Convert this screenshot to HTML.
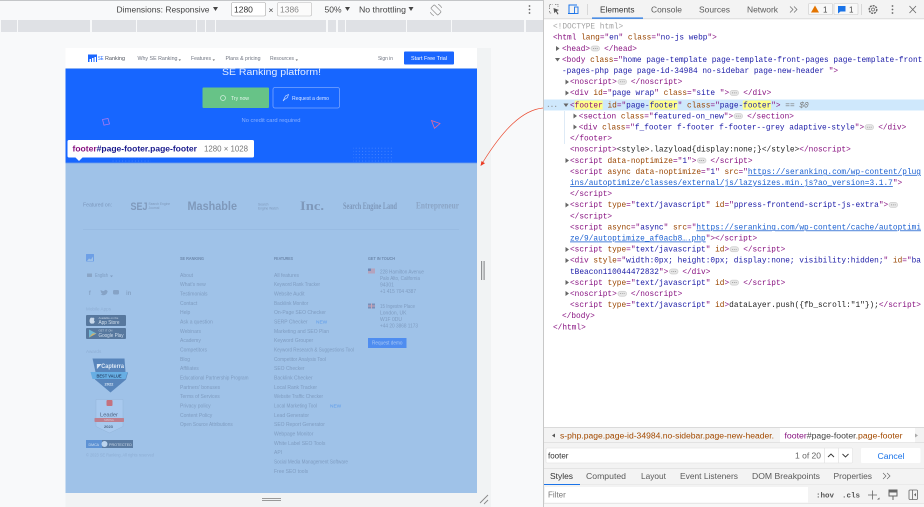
<!DOCTYPE html>
<html lang="en"><head><meta charset="utf-8"><title>DevTools</title>
<style>
html,body{margin:0;padding:0;width:924px;height:507px;overflow:hidden;background:#f8f9fa}
svg{display:block;filter:blur(.33px)}
text{font-family:"Liberation Sans",sans-serif;white-space:pre}
.m text,text.m{font-family:"Liberation Mono",monospace;font-size:7.8px;fill:#555}
.t{fill:#881280}.a{fill:#994500}.v{fill:#1a1aa6}.g{fill:#777}.k{fill:#222}
.l{fill:#1a5fd0;text-decoration:underline}
.f{font-size:5px;fill:#7f9cc0}
.h{font-size:4.4px;font-weight:bold;fill:#6d88ab}
.n{font-size:5.2px;fill:#6f7480}
.d{font-size:8.5px;fill:#444}
.tab{font-size:8.3px;fill:#5a5a5a}
</style></head><body>
<svg width="924" height="507" viewBox="0 0 924 507" xmlns="http://www.w3.org/2000/svg">
<defs>
<pattern id="dots" width="3.2" height="3.2" patternUnits="userSpaceOnUse"><circle cx="1" cy="1" r=".4" fill="#6396ff"/></pattern>
</defs>
<!-- left device toolbar -->
<rect width="543" height="507" fill="#f8f9fa"/>
<rect width="543" height="1" fill="#c4c6c8"/>
<rect y="1" width="543" height="17" fill="#f8f9fa"/>
<text x="116.5" y="12.5" class="d" textLength="93" lengthAdjust="spacingAndGlyphs">Dimensions: Responsive</text>
<path d="M213 7h5l-2.500 4z" fill="#444"/>
<rect x="231.500" y="2.500" width="34" height="13.500" rx="1.500" fill="#fff" stroke="#aaa" stroke-width=".6"/>
<text x="234" y="12.500" class="d" style="fill:#333">1280</text>
<text x="268.500" y="13" class="d">×</text>
<rect x="277.500" y="2.500" width="34" height="13.500" rx="1.500" fill="#fbfbfb" stroke="#bbb" stroke-width=".6"/>
<text x="280" y="12.500" class="d" style="fill:#888">1386</text>
<text x="324.500" y="12.500" class="d">50%</text>
<path d="M345 7h5l-2.500 4z" fill="#444"/>
<text x="359" y="12.500" class="d" textLength="47" lengthAdjust="spacingAndGlyphs">No throttling</text>
<path d="M408.500 7h5l-2.500 4z" fill="#444"/>
<g transform="rotate(-45 436 10)" fill="none" stroke="#8a8a8a" stroke-width=".7"><rect x="433.500" y="5" width="5" height="10" rx="1"/><path d="M430.500 7.500a7 7 0 0 0 0 5M441.500 7.500a7 7 0 0 1 0 5"/></g>
<g fill="#666"><circle cx="529.500" cy="6" r=".9"/><circle cx="529.500" cy="9.500" r=".9"/><circle cx="529.500" cy="13" r=".9"/></g>
<g fill="#dfe1e5">
<rect x="1" y="20" width="16" height="12"/><rect x="18" y="20" width="72" height="12"/><rect x="92" y="20" width="44" height="12"/><rect x="137" y="20" width="59" height="12"/><rect x="197" y="20" width="8" height="12"/><rect x="206" y="20" width="9" height="12"/><rect x="216" y="20" width="110" height="12"/><rect x="328" y="20" width="8" height="12"/><rect x="338" y="20" width="7" height="12"/><rect x="346" y="20" width="60" height="12"/><rect x="407" y="20" width="44" height="12"/><rect x="452" y="20" width="72" height="12"/><rect x="526" y="20" width="17" height="12"/>
</g>
<!-- page side strips -->
<rect x="477" y="48" width="14" height="445" fill="#f1f3f4"/>
<rect x="65.500" y="493" width="425.500" height="14" fill="#f1f3f4"/>
<rect x="481" y="261" width="1.200" height="19" fill="#8f9194"/><rect x="483.500" y="261" width="1.200" height="19" fill="#8f9194"/>
<rect x="262" y="498" width="19" height="1" fill="#999"/><rect x="262" y="500" width="19" height="1" fill="#999"/>
<path d="M480 503l8-8M484 504l4-4" stroke="#888" stroke-width=".9"/>
<!-- header -->
<rect x="65.500" y="48" width="411.500" height="20.500" fill="#fff"/>
<rect x="88" y="54.500" width="9" height="7.500" fill="#1a66ff"/>
<path d="M89.500 62v-3h1.500v3zM92 62v-4h1.500v4zM94.500 62v-5h1.500v5z" fill="#fff"/>
<text x="98" y="60" font-size="5" fill="#1a66ff" textLength="5.500" lengthAdjust="spacingAndGlyphs">SE</text>
<text x="105" y="60" font-size="5.200" fill="#4d525c" textLength="20" lengthAdjust="spacingAndGlyphs">Ranking</text>
<text x="137.500" y="60" class="n" textLength="40" lengthAdjust="spacingAndGlyphs">Why SE Ranking</text>
<text x="191" y="60" class="n" textLength="20" lengthAdjust="spacingAndGlyphs">Features</text>
<text x="225.500" y="60" class="n" textLength="35" lengthAdjust="spacingAndGlyphs">Plans &amp; pricing</text>
<text x="270" y="60" class="n" textLength="24" lengthAdjust="spacingAndGlyphs">Resources</text>
<path d="M178.500 59.500h2.500l-1.250 1.200zM212.500 59.500h2.500l-1.250 1.200zM295.500 59.500h2.500l-1.250 1.200z" fill="#555"/>
<text x="378" y="60" class="n" textLength="15" lengthAdjust="spacingAndGlyphs">Sign in</text>
<rect x="404" y="51.500" width="50" height="13" rx="1" fill="#1a66ff"/>
<text x="411" y="60" font-size="5.200" fill="#fff" textLength="36" lengthAdjust="spacingAndGlyphs">Start Free Trial</text>
<!-- blue hero -->
<rect x="65.500" y="68.500" width="411.500" height="95" fill="#1766ff"/>
<rect x="65.500" y="68" width="411.500" height=".8" fill="#a9c4f0"/>
<svg x="65.500" y="69" width="411.500" height="20" overflow="hidden"><text x="156.500" y="6" font-size="9.500" fill="#e6eeff" textLength="99" lengthAdjust="spacingAndGlyphs">SE Ranking platform!</text></svg>
<rect x="67" y="72" width="16" height="2" fill="url(#dots)"/>
<rect x="202.500" y="87.500" width="66.500" height="20.500" rx="1" fill="#67c387"/>
<circle cx="223" cy="98" r="2.500" fill="none" stroke="#d4f0de" stroke-width=".7"/>
<text x="231" y="100" font-size="5.200" fill="#e7f6ec" textLength="18" lengthAdjust="spacingAndGlyphs">Try now</text>
<rect x="273" y="87.500" width="66.500" height="20.500" rx="2" fill="none" stroke="#7aa6ff" stroke-width=".8"/>
<path d="M283 101l2.500-5 3-1.500-1 3-3 2z" fill="none" stroke="#cfe0ff" stroke-width=".6"/>
<text x="292" y="100" font-size="5.200" fill="#d9e6ff" textLength="37" lengthAdjust="spacingAndGlyphs">Request a demo</text>
<text x="241.500" y="122" font-size="5.400" fill="#8ab0ff" textLength="59" lengthAdjust="spacingAndGlyphs">No credit card required</text>
<path d="M102.500 119.500l5.500-1 1.500 5.500-5.500 1.200z" fill="none" stroke="#a97bf0" stroke-width=".8"/>
<path d="M431.500 120.500l8.500 3-5.500 4.800z" fill="none" stroke="#e86a9c" stroke-width=".8"/>
<rect x="353" y="146" width="40" height="17" fill="url(#dots)"/>
<rect x="112" y="158" width="39" height="5" fill="url(#dots)"/>
<!-- footer overlay -->
<rect x="65.500" y="163" width="411.500" height="330" fill="#9fc2e8"/>
<rect x="65.500" y="162.500" width="411.500" height=".8" fill="#5d93ee"/>
<text x="83" y="206.500" class="f" style="fill:#7b97bc;font-size:5.200px" textLength="29" lengthAdjust="spacingAndGlyphs">Featured on:</text>
<g fill="#7f99bb">
<text x="130.500" y="210" font-size="11" font-weight="bold" textLength="17" lengthAdjust="spacingAndGlyphs">SEJ</text>
<text x="148.500" y="205" font-size="3.300">Search Engine</text><text x="148.500" y="209" font-size="3.300">Journal</text>
<text x="187.500" y="210" font-size="11.500" font-weight="bold" textLength="49.500" lengthAdjust="spacingAndGlyphs">Mashable</text>
<text x="258" y="205.500" font-size="3.300">Search</text><text x="258" y="209.500" font-size="3.300">Engine Watch</text>
<text x="300" y="210" font-size="12.500" font-weight="bold" style="font-family:'Liberation Serif',serif" textLength="24" lengthAdjust="spacingAndGlyphs">Inc.</text>
<text x="343" y="209" font-size="9" font-weight="bold" style="font-family:'Liberation Serif',serif" textLength="54" lengthAdjust="spacingAndGlyphs">Search Engine Land</text>
<text x="416" y="208.500" font-size="9" font-weight="bold" style="font-family:'Liberation Serif',serif;fill:#8ba5c6" textLength="43" lengthAdjust="spacingAndGlyphs">Entrepreneur</text>
</g>
<rect x="83" y="229.300" width="376" height=".6" fill="#94b7de"/>
<!-- col 1 -->
<rect x="86" y="254" width="8" height="7.500" rx=".5" fill="#6d9fe6"/>
<path d="M87 261l2-2.500 2 1 2-3v4.500z" fill="#9fc2e8"/>
<rect x="87" y="273.500" width="5" height="3.500" fill="#8aa5c6"/>
<text x="95" y="277.200" class="f" textLength="13" lengthAdjust="spacingAndGlyphs">English</text>
<path d="M110 275.500h3l-1.500 1.700z" fill="#7f9cc0"/>
<g fill="#86a3c6">
<text x="88.700" y="295" font-size="6" font-weight="bold">f</text>
<path d="M100.500 290c2 1 3 1.200 3.700 1 .5-1.500 2.500-1.500 3 0l.8-.3-.6 1c0 2-2 3.500-4 3.500-1.200 0-2-.3-2.800-.8 1 0 1.500-.2 2-.6-1-.2-1.600-1-2.100-3.800z"/>
<rect x="113" y="290" width="6" height="4.500" rx="1.200"/>
<text x="126" y="295" font-size="6" font-weight="bold">in</text>
</g>
<text x="86" y="310.500" font-size="4.600" fill="#8eaed4">Mobile Apps</text>
<rect x="86" y="315" width="40" height="11" rx="1" fill="#57789e"/>
<path d="M91 317.500c1 .4 2 .4 2.500 0 .5 1 .7 .9 1.200 1.400-1 .6-1 2 .2 2.600-.6 1.500-1.300 2.500-2.400 2-1 .4-2.700 .2-3-2.500 0-2 1-3.200 1.500-3.500z" fill="#c8d8ea"/>
<text x="98.500" y="319" font-size="2.800" fill="#c4d4e6">Available on the</text>
<text x="98.500" y="324.200" font-size="5.600" fill="#d0deed" textLength="21" lengthAdjust="spacingAndGlyphs">App Store</text>
<rect x="86" y="328" width="40" height="11" rx="1" fill="#57789e"/>
<path d="M89 329.500l7.500 4-7.500 4z" fill="#6fb7d6"/><path d="M92.500 333.500l4 0-7.500 4z" fill="#d0b26a"/>
<text x="98.500" y="331.500" font-size="2.800" fill="#c4d4e6">GET IT ON</text>
<text x="98.500" y="337" font-size="5.600" fill="#d0deed" textLength="25" lengthAdjust="spacingAndGlyphs">Google Play</text>
<text x="86" y="353" font-size="4.600" fill="#8eaed4">Awards</text>
<path d="M92.500 358.500h32l1 13.500 2.500.5-2 7-15.500 13-15.500-13-2-7 2.500-.5z" fill="#5885bb"/>
<path d="M90.500 372h37l-2 7h-33z" fill="#67aee4"/>
<text x="97" y="368" font-size="6" font-weight="bold" fill="#dce8f5" textLength="27" lengthAdjust="spacingAndGlyphs">◤Capterra</text>
<text x="96.500" y="377.500" font-size="4.200" font-weight="bold" fill="#2b4b73" textLength="25" lengthAdjust="spacingAndGlyphs">BEST VALUE</text>
<text x="104.500" y="385.500" font-size="4" font-weight="bold" fill="#dce8f5">2022</text>
<path d="M96 399.500h27v27l-13.500 6.500-13.500-6.500z" fill="#a8c9ee" stroke="#93b5da" stroke-width=".5"/>
<rect x="106.500" y="400" width="6" height="6" rx="1" fill="#c4727f"/>
<text x="100" y="416.300" font-size="5.500" fill="#4d6280" textLength="18" lengthAdjust="spacingAndGlyphs">Leader</text>
<rect x="94.500" y="418" width="29.500" height="4" rx=".7" fill="#be7f8f"/>
<text x="104" y="421.200" font-size="2.600" fill="#d9c9d2">SPRING</text>
<text x="104" y="427.800" font-size="4" font-weight="bold" fill="#4d6280">2023</text>
<rect x="86" y="440" width="47" height="8" fill="#5a7ba2"/><rect x="86" y="440" width="16" height="8" fill="#5e92d4"/>
<circle cx="104.500" cy="444" r="3" fill="#bcd4ee"/>
<text x="88.500" y="445.800" font-size="3.600" fill="#cfe0f2">DMCA</text>
<text x="109" y="445.800" font-size="3.500" fill="#cfdcea" textLength="23" lengthAdjust="spacingAndGlyphs">PROTECTED</text>
<text x="86" y="456.500" font-size="4.200" fill="#8eaed4" textLength="68" lengthAdjust="spacingAndGlyphs">© 2023 SE Ranking. All rights reserved</text>
<!-- col 2 -->
<text x="180" y="259.800" class="h" textLength="24" lengthAdjust="spacingAndGlyphs">SE RANKING</text>
<g class="f">
<text class="f" x="180" y="276.800">About</text>
<text class="f" x="180" y="286.100">What's new</text>
<text class="f" x="180" y="295.400">Testimonials</text>
<text class="f" x="180" y="304.800">Contact</text>
<text class="f" x="180" y="314.100">Help</text>
<text class="f" x="180" y="323.400">Ask a question</text>
<text class="f" x="180" y="332.800">Webinars</text>
<text class="f" x="180" y="342.100">Academy</text>
<text class="f" x="180" y="351.400">Competitors</text>
<text class="f" x="180" y="360.800">Blog</text>
<text class="f" x="180" y="370.100">Affiliates</text>
<text class="f" x="180" y="379.400" textLength="68.500" lengthAdjust="spacingAndGlyphs">Educational Partnership Program</text>
<text class="f" x="180" y="388.800">Partners' bonuses</text>
<text class="f" x="180" y="398.100">Terms of Services</text>
<text class="f" x="180" y="407.400">Privacy policy</text>
<text class="f" x="180" y="416.800">Content Policy</text>
<text class="f" x="180" y="426.100" textLength="52.700" lengthAdjust="spacingAndGlyphs">Open Source Attributions</text>
</g>
<!-- col 3 -->
<text x="274" y="259.800" class="h" textLength="19" lengthAdjust="spacingAndGlyphs">FEATURES</text>
<text class="f" x="274" y="276.800">All features</text>
<text class="f" x="274" y="286.100" textLength="46" lengthAdjust="spacingAndGlyphs">Keyword Rank Tracker</text>
<text class="f" x="274" y="295.400">Website Audit</text>
<text class="f" x="274" y="304.800" textLength="34.300" lengthAdjust="spacingAndGlyphs">Backlink Monitor</text>
<text class="f" x="274" y="314.100">On-Page SEO Checker</text>
<text class="f" x="274" y="323.400">SERP Checker</text>
<text x="316" y="323.400" font-size="4.800" fill="#5d9ceb">NEW</text>
<text class="f" x="274" y="332.800">Marketing and SEO Plan</text>
<text class="f" x="274" y="342.100">Keyword Grouper</text>
<text class="f" x="274" y="351.400" textLength="80" lengthAdjust="spacingAndGlyphs">Keyword Research &amp; Suggestions Tool</text>
<text class="f" x="274" y="360.800" textLength="52" lengthAdjust="spacingAndGlyphs">Competitor Analysis Tool</text>
<text class="f" x="274" y="370.100">SEO Checker</text>
<text class="f" x="274" y="379.400">Backlink Checker</text>
<text class="f" x="274" y="388.800">Local Rank Tracker</text>
<text class="f" x="274" y="398.100" textLength="49" lengthAdjust="spacingAndGlyphs">Website Traffic Checker</text>
<text class="f" x="274" y="407.400" textLength="43" lengthAdjust="spacingAndGlyphs">Local Marketing Tool</text>
<text x="330" y="407.400" font-size="4.800" fill="#5d9ceb">NEW</text>
<text class="f" x="274" y="416.800">Lead Generator</text>
<text class="f" x="274" y="426.100">SEO Report Generator</text>
<text class="f" x="274" y="435.400">Webpage Monitor</text>
<text class="f" x="274" y="444.800">White Label SEO Tools</text>
<text class="f" x="274" y="454.100">API</text>
<text class="f" x="274" y="463.400" textLength="74" lengthAdjust="spacingAndGlyphs">Social Media Management Software</text>
<text class="f" x="274" y="472.800">Free SEO tools</text>
<!-- col 4 -->
<text x="368" y="259.800" class="h" textLength="27" lengthAdjust="spacingAndGlyphs">GET IN TOUCH</text>
<rect x="368" y="268.500" width="7" height="5" fill="#b5a3bd"/><rect x="368" y="268.500" width="3" height="2.500" fill="#6f88b5"/>
<text class="f" x="380" y="273.500" textLength="44" lengthAdjust="spacingAndGlyphs">228 Hamilton Avenue</text>
<text class="f" x="380" y="279.800" textLength="40" lengthAdjust="spacingAndGlyphs">Palo Alto, California</text>
<text class="f" x="380" y="286.300">94301</text>
<text class="f" x="380" y="292.800" textLength="36" lengthAdjust="spacingAndGlyphs">+1 415 704 4387</text>
<rect x="368" y="303.500" width="7" height="5" fill="#7a8fb8"/><path d="M368 306h7M371.500 303.500v5" stroke="#c9a5b8" stroke-width="1"/>
<text class="f" x="380" y="308" textLength="35" lengthAdjust="spacingAndGlyphs">15 Ingestre Place</text>
<text class="f" x="380" y="314.500">London, UK</text>
<text class="f" x="380" y="321">W1F 0DU</text>
<text class="f" x="380" y="327.500" textLength="38" lengthAdjust="spacingAndGlyphs">+44 20 3868 1173</text>
<rect x="368" y="338" width="38.500" height="10" fill="#4f8df0"/>
<text x="372" y="344.700" font-size="5" fill="#a9c8f5" textLength="30.500" lengthAdjust="spacingAndGlyphs">Request demo</text>
<!-- tooltip -->
<path d="M75 157h8l-4 4z" fill="#fff"/>
<rect x="67.500" y="140" width="186.500" height="17.500" rx="1.500" fill="#fff"/>
<text x="72.500" y="151.500" font-size="8.200" font-weight="bold" textLength="124.500" lengthAdjust="spacingAndGlyphs"><tspan fill="#881280">footer</tspan><tspan fill="#1a1a8c">#page-footer.page-footer</tspan></text>
<text x="204" y="151.500" font-size="8.200" fill="#777" textLength="44" lengthAdjust="spacingAndGlyphs">1280 × 1028</text>
<!-- devtools -->
<rect x="543" width="381" height="507" fill="#fff"/>
<rect x="543" width="1" height="507" fill="#c8c8c8"/>
<rect x="544" width="380" height="18.500" fill="#f3f3f3"/>
<rect x="544" y="18.500" width="380" height=".7" fill="#cfcfcf"/>
<path d="M549.500 9V4.500h3M555 4.500h3V7M549.500 11v2h2" fill="none" stroke="#777" stroke-width=".8" stroke-dasharray="1.400 .9"/><path d="M553.500 8l5.500 2-2.200 1 1.700 3-1 .5-1.700-3-1.500 1.800z" fill="#555"/>
<path d="M569 13V5h8M568 13.500h7" fill="none" stroke="#1a73e8" stroke-width="1"/><rect x="574.500" y="7" width="3.500" height="6.500" fill="none" stroke="#1a73e8" stroke-width=".9"/>
<rect x="587" y="4" width=".7" height="11" fill="#ccc"/>
<text x="600" y="12.500" class="tab" style="fill:#333" textLength="34.500" lengthAdjust="spacingAndGlyphs">Elements</text>
<rect x="592" y="17.500" width="51" height="1.200" fill="#1a73e8"/>
<text x="651" y="12.500" class="tab" textLength="31" lengthAdjust="spacingAndGlyphs">Console</text>
<text x="699" y="12.500" class="tab" textLength="31" lengthAdjust="spacingAndGlyphs">Sources</text>
<text x="747" y="12.500" class="tab" textLength="31" lengthAdjust="spacingAndGlyphs">Network</text>
<path d="M790 6.500l3 3-3 3M794 6.500l3 3-3 3" fill="none" stroke="#666" stroke-width=".7"/>
<rect x="808.500" y="3.500" width="24" height="11" rx="1" fill="#f8f8f8" stroke="#ccc" stroke-width=".6"/>
<path d="M811 12.500l4-7 4 7z" fill="#e37400"/>
<text x="823" y="12.300" font-size="8" fill="#444">1</text>
<rect x="834" y="3.500" width="24" height="11" rx="1" fill="#f8f8f8" stroke="#ccc" stroke-width=".6"/>
<path d="M838 6h7.500v5.500h-5l-2.500 2z" fill="#1a73e8"/>
<text x="849" y="12.300" font-size="8" fill="#444">1</text>
<rect x="861" y="4" width=".7" height="11" fill="#ccc"/>
<circle cx="873" cy="9.500" r="3.800" fill="none" stroke="#666" stroke-width="1.400" stroke-dasharray="2 .9"/><circle cx="873" cy="9.500" r="1.500" fill="none" stroke="#666" stroke-width=".7"/>
<g fill="#666"><circle cx="892.500" cy="6" r=".9"/><circle cx="892.500" cy="9.500" r=".9"/><circle cx="892.500" cy="13" r=".9"/></g>
<path d="M909.500 6l6.500 7M916 6l-6.500 7" stroke="#666" stroke-width=".8"/>
<!-- dom tree -->
<rect x="544" y="99.500" width="380" height="11" fill="#cfe8fc"/>
<rect x="574.700" y="100.500" width="28" height="9" fill="#ffff8a"/>
<rect x="649.400" y="100.500" width="28" height="9" fill="#ffff8a"/>
<rect x="742.800" y="100.500" width="28" height="9" fill="#ffff8a"/>
<rect x="564" y="111" width=".7" height="33" fill="#cfe0f2"/>
<text x="546" y="107" class="m" style="fill:#888;letter-spacing:-1px">...</text>
<g class="m">
<text x="553" y="28.600" style="fill:#a3a3a3">&lt;!DOCTYPE html&gt;</text>
<text x="553" y="39.700"><tspan class="t">&lt;html</tspan> <tspan class="a">lang</tspan><tspan class="t">="</tspan><tspan class="v">en</tspan><tspan class="t">"</tspan> <tspan class="a">class</tspan><tspan class="t">="</tspan><tspan class="v">no-js webp</tspan><tspan class="t">"&gt;</tspan></text>
<text x="562" y="50.800"><tspan class="t">&lt;head&gt;</tspan>   <tspan class="t">&lt;/head&gt;</tspan></text>
<text x="562" y="61.900"><tspan class="t">&lt;body</tspan> <tspan class="a">class</tspan><tspan class="t">="</tspan><tspan class="v">home page-template page-template-front-pages page-template-front</tspan></text>
<text x="562" y="73"><tspan class="v">-pages-php page page-id-34984 no-sidebar page-new-header </tspan><tspan class="t">"&gt;</tspan></text>
<text x="570" y="84.100"><tspan class="t">&lt;noscript&gt;</tspan>   <tspan class="t">&lt;/noscript&gt;</tspan></text>
<text x="570" y="95.200"><tspan class="t">&lt;div</tspan> <tspan class="a">id</tspan><tspan class="t">="</tspan><tspan class="v">page wrap</tspan><tspan class="t">"</tspan> <tspan class="a">class</tspan><tspan class="t">="</tspan><tspan class="v">site </tspan><tspan class="t">"&gt;</tspan>   <tspan class="t">&lt;/div&gt;</tspan></text>
<text x="570" y="107.300"><tspan class="t">&lt;footer</tspan> <tspan class="a">id</tspan><tspan class="t">="</tspan><tspan class="v">page-footer</tspan><tspan class="t">"</tspan> <tspan class="a">class</tspan><tspan class="t">="</tspan><tspan class="v">page-footer</tspan><tspan class="t">"&gt;</tspan> <tspan class="g">== </tspan><tspan class="g" font-style="italic">$0</tspan></text>
<text x="578.700" y="118.400"><tspan class="t">&lt;section</tspan> <tspan class="a">class</tspan><tspan class="t">="</tspan><tspan class="v">featured-on_new</tspan><tspan class="t">"&gt;</tspan>   <tspan class="t">&lt;/section&gt;</tspan></text>
<text x="578.700" y="129.500"><tspan class="t">&lt;div</tspan> <tspan class="a">class</tspan><tspan class="t">="</tspan><tspan class="v">f_footer f-footer f-footer--grey adaptive-style</tspan><tspan class="t">"&gt;</tspan>   <tspan class="t">&lt;/div&gt;</tspan></text>
<text x="570" y="140.600" class="m"><tspan class="t">&lt;/footer&gt;</tspan></text>
<text x="570" y="151.700"><tspan class="t">&lt;noscript&gt;</tspan><tspan class="k">&lt;style&gt;.lazyload{display:none;}&lt;/style&gt;</tspan><tspan class="t">&lt;/noscript&gt;</tspan></text>
<text x="570" y="162.800"><tspan class="t">&lt;script</tspan> <tspan class="a">data-noptimize</tspan><tspan class="t">="</tspan><tspan class="v">1</tspan><tspan class="t">"&gt;</tspan>   <tspan class="t">&lt;/script&gt;</tspan></text>
<text x="570" y="173.900"><tspan class="t">&lt;script</tspan> <tspan class="a">async data-noptimize</tspan><tspan class="t">="</tspan><tspan class="v">1</tspan><tspan class="t">"</tspan> <tspan class="a">src</tspan><tspan class="t">="</tspan><tspan class="l">https://seranking.com/wp-content/plug</tspan></text>
<text x="570" y="185"><tspan class="l">ins/autoptimize/classes/external/js/lazysizes.min.js?ao_version=3.1.7</tspan><tspan class="t">"&gt;</tspan></text>
<text x="570" y="196.100"><tspan class="t">&lt;/script&gt;</tspan></text>
<text x="570" y="207.200"><tspan class="t">&lt;script</tspan> <tspan class="a">type</tspan><tspan class="t">="</tspan><tspan class="v">text/javascript</tspan><tspan class="t">"</tspan> <tspan class="a">id</tspan><tspan class="t">="</tspan><tspan class="v">ppress-frontend-script-js-extra</tspan><tspan class="t">"&gt;</tspan></text>
<text x="570" y="218.300"><tspan class="t">&lt;/script&gt;</tspan></text>
<text x="570" y="229.400"><tspan class="t">&lt;script</tspan> <tspan class="a">async</tspan><tspan class="t">="</tspan><tspan class="v">async</tspan><tspan class="t">"</tspan> <tspan class="a">src</tspan><tspan class="t">="</tspan><tspan class="l">https://seranking.com/wp-content/cache/autoptimi</tspan></text>
<text x="570" y="240.500"><tspan class="l">ze/9/autoptimize_af0acb8….php</tspan><tspan class="t">"&gt;&lt;/script&gt;</tspan></text>
<text x="570" y="251.600"><tspan class="t">&lt;script</tspan> <tspan class="a">type</tspan><tspan class="t">="</tspan><tspan class="v">text/javascript</tspan><tspan class="t">"</tspan> <tspan class="a">id</tspan><tspan class="t">&gt;</tspan>   <tspan class="t">&lt;/script&gt;</tspan></text>
<text x="570" y="262.700"><tspan class="t">&lt;div</tspan> <tspan class="a">style</tspan><tspan class="t">="</tspan><tspan class="v">width:0px; height:0px; display:none; visibility:hidden;</tspan><tspan class="t">"</tspan> <tspan class="a">id</tspan><tspan class="t">="</tspan><tspan class="v">ba</tspan></text>
<text x="570" y="273.800"><tspan class="v">tBeacon110044472832</tspan><tspan class="t">"&gt;</tspan>   <tspan class="t">&lt;/div&gt;</tspan></text>
<text x="570" y="284.900"><tspan class="t">&lt;script</tspan> <tspan class="a">type</tspan><tspan class="t">="</tspan><tspan class="v">text/javascript</tspan><tspan class="t">"</tspan> <tspan class="a">id</tspan><tspan class="t">&gt;</tspan>   <tspan class="t">&lt;/script&gt;</tspan></text>
<text x="570" y="296"><tspan class="t">&lt;noscript&gt;</tspan>   <tspan class="t">&lt;/noscript&gt;</tspan></text>
<text x="570" y="307.100"><tspan class="t">&lt;script</tspan> <tspan class="a">type</tspan><tspan class="t">="</tspan><tspan class="v">text/javascript</tspan><tspan class="t">"</tspan> <tspan class="a">id</tspan><tspan class="t">&gt;</tspan><tspan class="k">dataLayer.push({fb_scroll:"1"});</tspan><tspan class="t">&lt;/script&gt;</tspan></text>
<text x="562" y="318.200"><tspan class="t">&lt;/body&gt;</tspan></text>
<text x="553" y="329.300"><tspan class="t">&lt;/html&gt;</tspan></text>
</g>
<!-- ellipsis pills -->
<g fill="#e6e6e6" stroke="#bdbdbd" stroke-width=".5">
<rect x="591" y="46" width="8.500" height="5" rx="2.200"/>
<rect x="618" y="79.300" width="8.500" height="5" rx="2.200"/>
<rect x="730" y="90.400" width="8.500" height="5" rx="2.200"/>
<rect x="734" y="113.600" width="8.500" height="5" rx="2.200"/>
<rect x="865" y="124.700" width="8.500" height="5" rx="2.200"/>
<rect x="697.500" y="158" width="8.500" height="5" rx="2.200"/>
<rect x="889" y="202.400" width="8.500" height="5" rx="2.200"/>
<rect x="730" y="246.800" width="8.500" height="5" rx="2.200"/>
<rect x="669.500" y="269" width="8.500" height="5" rx="2.200"/>
<rect x="730" y="280.100" width="8.500" height="5" rx="2.200"/>
<rect x="618" y="291.200" width="8.500" height="5" rx="2.200"/>
</g>
<path d="M593 48.500h4.500M620 81.800h4.500M732 92.900h4.500M736 116.100h4.500M867 127.200h4.500M699.500 160.500h4.500M891 204.900h4.500M732 249.300h4.500M671.500 271.500h4.500M732 282.600h4.500M620 293.700h4.500" stroke="#666" stroke-width=".7" stroke-dasharray=".7 1.200" fill="none"/>
<!-- disclosure arrows -->
<g fill="#666">
<path d="M556 46l3.500 2.500-3.500 2.500zM565.500 79.500l3.500 2.500-3.500 2.500zM565.500 90.500l3.500 2.500-3.500 2.500zM573.500 113.500l3.500 2.500-3.500 2.500zM573.500 124.500l3.500 2.500-3.500 2.500zM565.500 158l3.500 2.500-3.500 2.500zM565.500 202.500l3.500 2.500-3.500 2.500zM565.500 247l3.500 2.500-3.500 2.500zM565.500 258l3.500 2.500-3.500 2.500zM565.500 280l3.500 2.500-3.500 2.500zM565.500 291l3.500 2.500-3.500 2.500z"/>
<path d="M555 58l5 0-2.500 3.500zM563.500 103.500l5 0-2.500 3.500z"/>
</g>
<!-- breadcrumb -->
<rect x="544" y="427.500" width="380" height="15" fill="#f3f3f3"/>
<rect x="544" y="427" width="380" height=".7" fill="#d0d0d0"/>
<rect x="544" y="442.500" width="380" height=".7" fill="#d0d0d0"/>
<path d="M555 433.500v4l-3-2z" fill="#555"/>
<text x="560" y="438.300" font-size="8" fill="#a34a00" textLength="214" lengthAdjust="spacingAndGlyphs">s-php.page.page-id-34984.no-sidebar.page-new-header.</text>
<rect x="780" y="428" width="135" height="14.500" fill="#fff"/>
<text x="784.500" y="438.300" font-size="8" textLength="118" lengthAdjust="spacingAndGlyphs"><tspan fill="#881280">footer</tspan><tspan fill="#444">#page-footer</tspan><tspan fill="#a34a00">.page-footer</tspan></text>
<path d="M915 433.500v4l3-2z" fill="#aaa"/>
<!-- search -->
<rect x="544" y="443" width="380" height="25" fill="#f3f3f3"/>
<rect x="546" y="448" width="306.500" height="15" rx="1" fill="#fff" stroke="#ddd" stroke-width=".5"/>
<text x="548" y="458.500" font-size="8" fill="#333">footer</text>
<text x="795" y="458.500" font-size="8" fill="#666" textLength="26" lengthAdjust="spacingAndGlyphs">1 of 20</text>
<rect x="824" y="448" width=".6" height="15" fill="#ddd"/><rect x="838" y="448" width=".6" height="15" fill="#ddd"/>
<path d="M828 457l3-3 3 3M842.500 454l3 3 3-3" fill="none" stroke="#333" stroke-width=".9"/>
<rect x="861" y="448" width="59.500" height="15" rx="1" fill="#fff"/>
<text x="877.500" y="458.800" font-size="8" fill="#1a73e8" textLength="27" lengthAdjust="spacingAndGlyphs">Cancel</text>
<!-- styles tabs -->
<rect x="544" y="468" width="380" height=".7" fill="#d4d4d4"/>
<rect x="544" y="468.500" width="380" height="16.500" fill="#f3f3f3"/>
<text x="550" y="479" class="tab" style="fill:#333" textLength="23" lengthAdjust="spacingAndGlyphs">Styles</text>
<text x="586" y="479" class="tab" textLength="40" lengthAdjust="spacingAndGlyphs">Computed</text>
<text x="641" y="479" class="tab" textLength="25" lengthAdjust="spacingAndGlyphs">Layout</text>
<text x="680" y="479" class="tab" textLength="58" lengthAdjust="spacingAndGlyphs">Event Listeners</text>
<text x="752" y="479" class="tab" textLength="68" lengthAdjust="spacingAndGlyphs">DOM Breakpoints</text>
<text x="833.500" y="479" class="tab" textLength="38.500" lengthAdjust="spacingAndGlyphs">Properties</text>
<path d="M883 473l3 3-3 3M887 473l3 3-3 3" fill="none" stroke="#666" stroke-width=".7"/>
<rect x="544" y="484" width="36" height="1.300" fill="#1a73e8"/>
<rect x="580" y="484.700" width="344" height=".6" fill="#d4d4d4"/>
<rect x="544" y="485" width="380" height="18" fill="#f3f3f3"/>
<rect x="545" y="487" width="263" height="15.500" fill="#fff"/>
<text x="548" y="497.500" font-size="8" fill="#777">Filter</text>
<text x="816" y="497.500" font-size="7.500" font-weight="bold" fill="#555" style="font-family:'Liberation Mono',monospace">:hov</text>
<text x="842" y="497.500" font-size="7.500" font-weight="bold" fill="#555" style="font-family:'Liberation Mono',monospace">.cls</text>
<path d="M868 495h9M872.500 490.500v9" stroke="#666" stroke-width=".8"/><path d="M877 499.500h2.500v-2z" fill="#666"/>
<path d="M889 490h8v6h-8zM893 496v4" fill="none" stroke="#666" stroke-width="1"/><rect x="889" y="490" width="8" height="2.500" fill="#666"/>
<rect x="909" y="490" width="8.500" height="9.500" rx="1" fill="none" stroke="#666" stroke-width=".8"/><rect x="912" y="490" width=".8" height="9.500" fill="#666"/><path d="M916 493v3.500l-2-1.750z" fill="#666"/>
<rect x="544" y="503" width="380" height="4" fill="#f8f8f8"/>
<rect x="544" y="503" width="380" height=".6" fill="#dcdcdc"/>
<!-- red arrow -->
<path d="M543 108C522 110 503 130 483 162" fill="none" stroke="#ea4a2f" stroke-width=".7"/>
<path d="M480.500 166l1-5 3.500 2.200z" fill="#ea3a22"/>
</svg>
</body></html>
